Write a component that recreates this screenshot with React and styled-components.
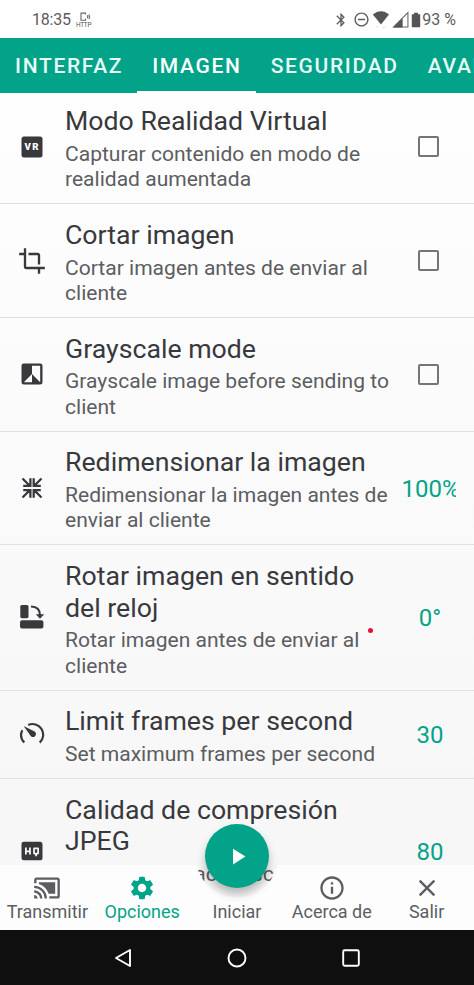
import styled, { createGlobalStyle } from "styled-components";
import {
	MdBluetooth,
	MdCastConnected,
	MdClose,
	MdCrop,
	MdHighQuality,
	MdInfoOutline,
	MdPlayArrow,
	MdRemoveCircleOutline,
	MdSettings,
} from "react-icons/md";

const $green = "#03a389";
const $dark = "#38393d";
const $gray = "#5c5d61";

const VrIcon = () => (
	<svg width="28" height="28" viewBox="0 0 28 28">
		<rect x="3.5" y="3.5" width="21" height="21" rx="2.5" fill={$dark} />
		<text x="6.4" y="17.4" fontSize="9.6" fontWeight="900" letterSpacing="1.4" fill="#fff">
			VR
		</text>
	</svg>
);

const GrayscaleIcon = () => (
	<svg width="28" height="28" viewBox="0 0 24 24">
		<path
			fill={$dark}
			fillRule="evenodd"
			d="M5 3h14a2 2 0 0 1 2 2v14a2 2 0 0 1-2 2H5a2 2 0 0 1-2-2V5a2 2 0 0 1 2-2zm7 2v7l7 7V5zM12 12v7H5z"
		/>
	</svg>
);

const ResizeIcon = () => (
	<svg width="28" height="28" viewBox="0 0 28 28" fill="none" stroke={$dark} strokeWidth="2.3">
		<path d="M4.5 4.5l7 7M5.2 11.8h7.2V4.3M23.5 4.5l-7 7M22.8 11.8h-7.1V4.3M4.5 23.5l7-7M5.2 16.2h7.2v7.5M23.5 23.5l-7-7M22.8 16.2h-7.1v7.5" />
	</svg>
);

const RotateIcon = () => (
	<svg width="28" height="28" viewBox="0 0 28 28">
		<rect x="2.3" y="2" width="8.2" height="13.2" rx="1.6" fill={$dark} />
		<rect x="2" y="17.2" width="23.4" height="8.2" rx="2" fill={$dark} />
		<path d="M13 3.5c6 0 9 3.5 9 9" fill="none" stroke={$dark} strokeWidth="2.1" />
		<path d="M17.8 11.2h8.4L22 15.8z" fill={$dark} />
	</svg>
);

const SpeedIcon = () => (
	<svg width="28" height="28" viewBox="0 0 28 28">
		<path
			d="M6.3 22.6A11 11 0 0 1 4.3 10.2M10.2 4.9A10.7 10.7 0 0 1 21.7 22.6"
			fill="none"
			stroke={$dark}
			strokeWidth="2.2"
		/>
		<path d="M5.6 6.1l11 5.3a3.1 3.1 0 1 1-4.6 3.7z" fill={$dark} />
	</svg>
);

const CastScreenIcon = () => (
	<svg width="16" height="16" viewBox="0 0 16 16" fill="none" stroke="#666" strokeWidth="1.1">
		<path d="M9.5 2.6V1.1H5v7.2h4.5V6.8M11.3 3.2q1 1.5 0 3M12.8 2.4q1.4 2.3 0 4.6" />
		<text x="0" y="15.2" fontSize="6.4" textLength="15.5" fill="#555" stroke="none">
			HTTP
		</text>
	</svg>
);

const WifiIcon = () => (
	<svg width="18" height="20" viewBox="0 0 18 20">
		<path d="M0.8 4.5C6 0 12 0 17 4.5L9 14.5z" fill="#555" />
		<path d="M3.6 16.8h2.5M10.5 17.3h3" stroke="#ddd" />
	</svg>
);

const SignalIcon = () => (
	<svg width="17" height="17" viewBox="0 0 16 16">
		<path d="M15 1.5V15H1.5z" fill="#fff" stroke="#666" strokeWidth="1" />
		<path d="M1 15.5L10 6.5v9z" fill="#555" />
	</svg>
);

const BatteryIcon = () => (
	<svg width="10" height="16" viewBox="0 0 10 16">
		<path d="M3 0.8h4v1.4h2.2v13H0.8v-13H3z" fill="#555" />
	</svg>
);

const options = [
	{ icon: <VrIcon />, title: "Modo Realidad Virtual", text: "Capturar contenido en modo de\nrealidad aumentada" },
	{ icon: <MdCrop />, title: "Cortar imagen", text: "Cortar imagen antes de enviar al\ncliente" },
	{ icon: <GrayscaleIcon />, title: "Grayscale mode", text: "Grayscale image before sending to\nclient" },
	{
		icon: <ResizeIcon />,
		title: "Redimensionar la imagen",
		text: "Redimensionar la imagen antes de\nenviar al cliente",
		value: "100%",
	},
	{
		icon: <RotateIcon />,
		title: "Rotar imagen en sentido\ndel reloj",
		text: "Rotar imagen antes de enviar al\ncliente",
		value: "0°",
		dot: true,
	},
	{ icon: <SpeedIcon />, title: "Limit frames per second", text: "Set maximum frames per second", value: "30" },
	{
		icon: <MdHighQuality />,
		title: "Calidad de compresión\nJPEG",
		text: "Modificar impacto esc. en\nla imagen",
		value: "80",
	},
];

const tabs = ["INTERFAZ", "IMAGEN", "SEGURIDAD", "AVANZADO"];

const menus = [
	{ icon: <MdCastConnected />, label: "Transmitir" },
	{ icon: <MdSettings />, label: "Opciones", active: true },
	{ label: "Iniciar" },
	{ icon: <MdInfoOutline />, label: "Acerca de" },
	{ icon: <MdClose />, label: "Salir" },
];

export default function App() {
	return (
		<Screen>
			<GlobalStyle />
			<StatusBar>
				<Clock>18:35</Clock>
				<CastScreenIcon />
				<StatusIcons>
					<MdBluetooth size={16} />
					<MdRemoveCircleOutline size={17} />
					<WifiIcon />
					<SignalIcon />
					<BatteryIcon />
				</StatusIcons>
				<Battery>93 %</Battery>
			</StatusBar>
			<TabBar>
				{tabs.map((tab) => (
					<Tab key={tab} selected={tab === "IMAGEN"}>
						{tab}
					</Tab>
				))}
			</TabBar>
			<OptionList>
				{options.map((option) => (
					<Option key={option.title} {...option} />
				))}
			</OptionList>
			<BottomMenu>
				{menus.map(({ icon, label, active }) => (
					<MenuItem key={label} $active={active}>
						<MenuIcon>{icon}</MenuIcon>
						<span>{label}</span>
					</MenuItem>
				))}
				<StartButton>
					<MdPlayArrow size={27} />
				</StartButton>
			</BottomMenu>
			<SystemBar>
				<svg width="20" height="20" viewBox="0 0 20 20">
					<path d="M17 2v16L3 10z" />
				</svg>
				<svg width="20" height="20" viewBox="0 0 20 20">
					<circle cx="10" cy="10" r="8.5" />
				</svg>
				<svg width="20" height="20" viewBox="0 0 20 20">
					<rect x="2.2" y="2.2" width="15.6" height="15.6" rx="1.5" />
				</svg>
			</SystemBar>
		</Screen>
	);
}

function Tab({ selected, children }) {
	return <TabItem $selected={selected}>{children}</TabItem>;
}

function Option({ icon, title, text, value, dot }) {
	return (
		<OptionRow>
			<OptionIcon>{icon}</OptionIcon>
			<OptionBody>
				<OptionTitle>{title}</OptionTitle>
				<OptionText>{text}</OptionText>
				{dot && <RedDot />}
			</OptionBody>
			{value ? <OptionValue $clipped={value.length > 3}>{value}</OptionValue> : <CheckBox />}
		</OptionRow>
	);
}

const GlobalStyle = createGlobalStyle`
	* { box-sizing: border-box; }
	body { margin: 0; overflow: hidden; }
	svg { display: block; flex-shrink: 0; }
`;

const Screen = styled.div`
	display: flex;
	flex-direction: column;
	width: 474px;
	height: 985px;
	overflow: hidden;
	background: #fff;
	color: ${$dark};
	font-family: Roboto, "Liberation Sans", sans-serif;
`;

const StatusBar = styled.header`
	display: flex;
	align-items: center;
	flex: 0 0 38px;
	padding: 1px 18px 0 32px;
	color: #5c5c5c;
`;

const Clock = styled.span`
	width: 44px;
	font-size: 16px;
	letter-spacing: -0.2px;
`;

const StatusIcons = styled.div`
	display: flex;
	align-items: center;
	gap: 2px;
	margin-left: auto;

	> :first-child { margin-right: 2px; }
`;

const Battery = styled.span`
	margin-left: 1px;
	font-size: 16px;
`;

const TabBar = styled.nav`
	display: flex;
	position: relative;
	z-index: 1;
	flex: 0 0 55px;
	overflow: hidden;
	background: ${$green};
`;

const TabItem = styled.div`
	flex-shrink: 0;
	padding: 0 14px 0 15px;
	border-bottom: 2px solid ${({ $selected }) => ($selected ? "#fff" : "transparent")};
	color: ${({ $selected }) => ($selected ? "#fff" : "#e6fbf6")};
	font-size: 21px;
	font-weight: 500;
	letter-spacing: 1.68px;
	line-height: 57px;
`;

const OptionList = styled.ul`
	flex: 1;
	min-height: 0;
	margin: -2.4px 0 0;
	padding: 0;
	overflow: hidden;
	list-style: none;
	background: linear-gradient(#fefefe, #fafafb 45%, #f6f6f7);
`;

const OptionRow = styled.li`
	display: flex;
	align-items: center;
	border-bottom: 1.4px solid #e0e0e1;
`;

const OptionIcon = styled.div`
	display: flex;
	justify-content: center;
	flex: 0 0 65px;
	padding-right: 1px;
	font-size: 28px;
`;

const OptionBody = styled.div`
	position: relative;
	flex: 0 0 337px;
	padding: 15.8px 0 11.8px;
	white-space: pre;
`;

const OptionTitle = styled.div`
	margin-bottom: 3.2px;
	font-size: 26.7px;
	line-height: 31.5px;
`;

const OptionText = styled.div`
	color: ${$gray};
	font-size: 21.05px;
	line-height: 25.2px;
`;

const RedDot = styled.i`
	position: absolute;
	top: 83px;
	left: 303px;
	width: 5px;
	height: 5px;
	border-radius: 50%;
	background: #e0123f;
`;

const OptionValue = styled.div`
	flex: 0 0 54px;
	padding-top: 2px;
	padding-left: ${({ $clipped }) => ($clipped ? 0 : 2)}px;
	overflow: hidden;
	color: ${$green};
	font-size: 24px;
	line-height: 30px;
	text-align: ${({ $clipped }) => ($clipped ? "left" : "center")};
	text-indent: ${({ $clipped }) => ($clipped ? "-0.5px" : 0)};
`;

const CheckBox = styled.div`
	width: 21px;
	height: 21px;
	margin-left: 15.6px;
	border: 2px solid #757577;
	border-radius: 2px;
`;

const BottomMenu = styled.nav`
	display: grid;
	grid-template-columns: repeat(5, 1fr);
	position: relative;
	z-index: 1;
	flex: 0 0 65px;
	margin-top: -65px;

	&::before {
		content: "";
		position: absolute;
		inset: 0;
		background: #fdfdfe;
		mask: radial-gradient(circle at 237px -9px, transparent 41px, #000 41.8px);
	}
`;

const MenuItem = styled.div`
	display: flex;
	flex-direction: column;
	align-items: center;
	position: relative;
	z-index: 1;
	padding-top: 9px;
	color: ${({ $active }) => ($active ? $green : $gray)};
	font-size: 18px;
	line-height: 20px;
`;

const MenuIcon = styled.div`
	height: 28px;
	font-size: 28px;
`;

const StartButton = styled.div`
	display: flex;
	align-items: center;
	justify-content: center;
	position: absolute;
	top: -41px;
	left: 205px;
	width: 64px;
	height: 64px;
	border-radius: 50%;
	background: ${$green};
	box-shadow: 0 6px 8px rgba(0, 0, 0, 0.25);
	color: #fff;
`;

const SystemBar = styled.footer`
	display: flex;
	align-items: center;
	justify-content: space-between;
	flex: 0 0 55px;
	z-index: 1;
	padding: 0 113px;
	background: #0f0f10;

	svg {
		fill: none;
		stroke: #fff;
		stroke-width: 1.9;
		stroke-linejoin: round;
	}
`;
